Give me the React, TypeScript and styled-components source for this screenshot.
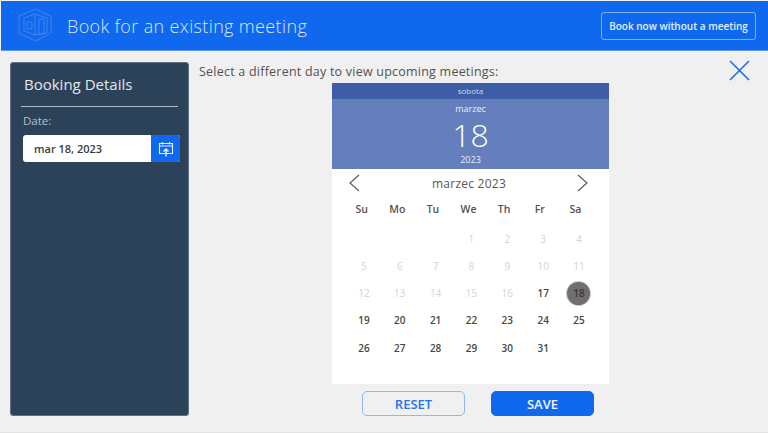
import React from "react";
import styled, { createGlobalStyle } from "styled-components";

const Global = createGlobalStyle`
  html, body { margin: 0; padding: 0; width: 768px; height: 433px; overflow: hidden; background: #f0f0f0; }
  * { box-sizing: border-box; }
  body { font-family: "Open Sans", "Noto Sans", sans-serif; }
`;

const Page = styled.div`
  width: 768px;
  height: 433px;
  display: flex;
  flex-direction: column;
  background: #f0f0f0;
  padding: 1px 0 2px 1px;
  border-bottom: 1px solid #e4e4e4;
`;

const Header = styled.header`
  height: 50px;
  flex: none;
  background: #1068ee;
  border-bottom: 1px solid #5b97f0;
  display: flex;
  align-items: center;
  padding: 0 12px 0 17px;
`;

const Logo = styled.svg`
  width: 35px;
  height: 35px;
  margin-right: 14px;
  flex: none;
`;

const Title = styled.h1`
  margin: 0;
  flex: 1;
  font-size: 18px;
  font-weight: 300;
  color: #d9e6fb;
  letter-spacing: 0.02em;
  white-space: nowrap;
`;

const GhostButton = styled.button`
  width: 155px;
  height: 28px;
  border: 1px solid #7fb0f6;
  border-radius: 3px;
  background: transparent;
  color: #e4eefc;
  font: 600 10px "Open Sans", sans-serif;
  padding: 0;
`;

const Body = styled.div`
  flex: 1;
  display: flex;
  padding: 11px 0 14px 9px;
  min-height: 0;
`;

const Sidebar = styled.aside`
  width: 179px;
  flex: none;
  background: #2c4259;
  border: 1px solid #5e7086;
  border-radius: 3px;
  padding: 0 8px 0 11px;
  margin-right: 10px;
  color: #dfe4ea;
  display: flex;
  flex-direction: column;
`;

const SideTitle = styled.h2`
  margin: 0;
  height: 44px;
  margin-left: -1px;
  margin-right: 2px;
  padding: 9px 0 0 3px;
  border-bottom: 1.5px solid #b4bcc6;
  font-size: 15px;
  font-weight: 400;
  color: #e3e8ee;
  line-height: 24px;
`;

const DateLabel = styled.div`
  font-size: 11.5px;
  color: #b6bfca;
  margin: 6px 0 6px 1px;
  line-height: 16px;
`;

const DateField = styled.div`
  display: flex;
  height: 27px;
  margin-left: 1px;
  border-radius: 3px;
  overflow: hidden;
  background: #fff;
`;

const DateValue = styled.div`
  flex: 1;
  font-size: 11px;
  font-weight: 600;
  color: #3a3a3a;
  line-height: 27px;
  padding-left: 11px;
`;

const DateButton = styled.div`
  width: 29px;
  background: #1068ee;
  display: flex;
  align-items: center;
  justify-content: center;
`;

const Main = styled.main`
  flex: 1;
  display: flex;
  flex-direction: column;
  min-width: 0;
`;

const TopRow = styled.div`
  display: flex;
  justify-content: space-between;
  height: 21px;
  padding-right: 18px;
`;

const Prompt = styled.div`
  font-size: 12.5px;
  color: #55504f;
  line-height: 20px;
  letter-spacing: 0.018em;
  white-space: nowrap;
`;

const CloseIcon = styled.svg`
  width: 21px;
  height: 21px;
  flex: none;
  margin-top: -2px;
`;

const Calendar = styled.section`
  width: 277px;
  height: 303px;
  margin-left: 133px;
  background: #fff;
  display: flex;
  flex-direction: column;
`;

const Weekday = styled.div`
  height: 16px;
  background: #3d5ea6;
  color: #cfd8ea;
  font-size: 8px;
  line-height: 16px;
  text-align: center;
`;

const Banner = styled.div`
  height: 70px;
  background: #647fbc;
  color: #e9edf6;
  display: flex;
  flex-direction: column;
  align-items: center;
`;

const BannerMonth = styled.div`
  font-size: 9px;
  line-height: 12px;
  margin-top: 4px;
`;

const BannerDay = styled.div`
  font-size: 32px;
  font-weight: 300;
  color: #fff;
  line-height: 38px;
  margin-top: 1px;
`;

const BannerYear = styled.div`
  font-size: 9px;
  line-height: 12px;
`;

const NavRow = styled.div`
  height: 29px;
  display: flex;
  align-items: center;
  justify-content: space-between;
  padding: 0 20px 0 16px;
`;

const NavLabel = styled.div`
  font-size: 12px;
  color: #5a5655;
  letter-spacing: 0.02em;
  margin-left: 1px;
`;

const Chevron = styled.svg`
  width: 12px;
  height: 18px;
`;

const WeekHead = styled.div`
  display: grid;
  grid-template-columns: repeat(7, 35.6px);
  margin: 2px 0 0 12px;
  height: 22px;
`;

const HeadCell = styled.div`
  font-size: 10.5px;
  font-weight: 600;
  color: #57514f;
  text-align: center;
  line-height: 18px;
`;

const DayGrid = styled.div`
  display: grid;
  grid-template-columns: repeat(7, 35.85px);
  grid-auto-rows: 27.3px;
  margin: 0 0 0 14px;
  padding-top: 3px;
`;

const DayCell = styled.div<{ $muted?: boolean }>`
  display: flex;
  align-items: center;
  justify-content: center;
  font-size: 10px;
  font-weight: ${(p) => (p.$muted ? 400 : 600)};
  color: ${(p) => (p.$muted ? "#d4d4d4" : "#4a4543")};
`;

const SelectedDay = styled.span`
  width: 23px;
  height: 23px;
  border-radius: 50%;
  background: #716f6e;
  box-shadow: 0 0 0 1px #c9c9c9;
  color: #3c3838;
  display: flex;
  align-items: center;
  justify-content: center;
`;

const Actions = styled.div`
  display: flex;
  gap: 26px;
  margin: 7px 0 0 163px;
`;

const ActionButton = styled.button<{ $primary?: boolean }>`
  width: 103px;
  height: 25px;
  border-radius: 5px;
  border: ${(p) => (p.$primary ? "1px solid #1068ee" : "1px solid #8fb8f5")};
  background: ${(p) => (p.$primary ? "#1068ee" : "transparent")};
  color: ${(p) => (p.$primary ? "#f2f6fe" : "#2a74ea")};
  font: 600 13px "Open Sans", sans-serif;
  padding: 0;
`;

const heads = ["Su", "Mo", "Tu", "We", "Th", "Fr", "Sa"];
const cells: (number | null)[] = [null, null, null, ...Array.from({ length: 31 }, (_, i) => i + 1)];

export default function App() {
  return (
    <Page>
      <Global />
      <Header>
        <Logo viewBox="0 0 35 35" fill="none" stroke="#4f8cec" strokeWidth="0.8">
          <path d="M17.5 1 L33 8 V25 L17.5 33 L1 25 V8 Z" />
          <path d="M1 8 L17.5 15 L33 8 M17.5 15 V33" opacity="0" />
          <path d="M6 10 L17 6 V27 L6 23 Z" />
          <path d="M17 6 L29 10 V25 L17 27" />
          <path d="M9 14 h5 v7 h-5 Z M21 11 h5 v15 h-5 Z" />
        </Logo>
        <Title>Book for an existing meeting</Title>
        <GhostButton>Book now without a meeting</GhostButton>
      </Header>
      <Body>
        <Sidebar>
          <SideTitle>Booking Details</SideTitle>
          <DateLabel>Date:</DateLabel>
          <DateField>
            <DateValue>mar 18, 2023</DateValue>
            <DateButton>
              <svg width="16" height="16" viewBox="0 0 16 16" fill="none" stroke="#e6effd" strokeWidth="1.1">
                <path d="M1.5 2.5 H14.5 V12.5 H1.5 Z M1.5 5 H14.5 M4.5 1 V3.5 M11.5 1 V3.5" />
                <path d="M8 15.5 V8 M5.5 10.5 L8 8 L10.5 10.5" strokeWidth="1.5" />
              </svg>
            </DateButton>
          </DateField>
        </Sidebar>
        <Main>
          <TopRow>
            <Prompt>Select a different day to view upcoming meetings:</Prompt>
            <CloseIcon viewBox="0 0 21 21" fill="none" stroke="#1a6eea" strokeWidth="1.6">
              <path d="M1 1 L20 20 M20 1 L1 20" />
            </CloseIcon>
          </TopRow>
          <Calendar>
            <Weekday>sobota</Weekday>
            <Banner>
              <BannerMonth>marzec</BannerMonth>
              <BannerDay>18</BannerDay>
              <BannerYear>2023</BannerYear>
            </Banner>
            <NavRow>
              <Chevron viewBox="0 0 12 18" fill="none" stroke="#5c5c5c" strokeWidth="1.2">
                <path d="M11 1 L2 9 L11 17" />
              </Chevron>
              <NavLabel>marzec 2023</NavLabel>
              <Chevron viewBox="0 0 12 18" fill="none" stroke="#5c5c5c" strokeWidth="1.2">
                <path d="M1 1 L10 9 L1 17" />
              </Chevron>
            </NavRow>
            <WeekHead>
              {heads.map((h) => (
                <HeadCell key={h}>{h}</HeadCell>
              ))}
            </WeekHead>
            <DayGrid>
              {cells.map((d, i) =>
                d === null ? (
                  <DayCell key={`e${i}`} />
                ) : (
                  <DayCell key={d} $muted={d < 17}>
                    {d === 18 ? <SelectedDay>18</SelectedDay> : d}
                  </DayCell>
                )
              )}
            </DayGrid>
          </Calendar>
          <Actions>
            <ActionButton>RESET</ActionButton>
            <ActionButton $primary>SAVE</ActionButton>
          </Actions>
        </Main>
      </Body>
    </Page>
  );
}
